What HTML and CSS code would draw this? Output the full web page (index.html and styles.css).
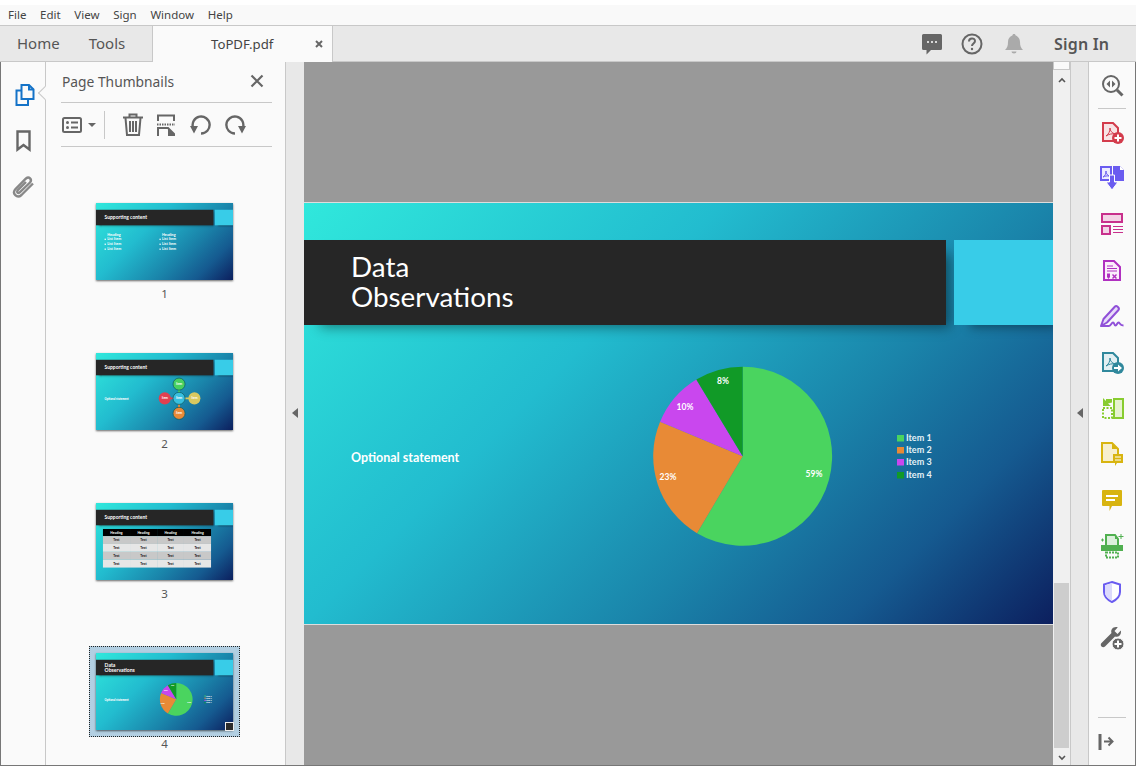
FILE: index.html
```html
<!DOCTYPE html>
<html lang="en">
<head>
<meta charset="utf-8">
<title>ToPDF.pdf</title>
<link rel="stylesheet" href="styles.css">
</head>
<body>
<div class="app">
  <nav class="menu">
    <span>File</span><span>Edit</span><span>View</span><span>Sign</span><span>Window</span><span>Help</span>
  </nav>
  <header class="tabs">
    <div class="tabs-nav"><span class="tab-home">Home</span><span>Tools</span></div>
    <div class="tab-file"><span class="tab-name">ToPDF.pdf</span>
      <svg class="tab-close" viewBox="0 0 8 8"><path d="M1 1l6 6M7 1L1 7"/></svg>
    </div>
    <div class="tabs-right">
      <svg class="top-ic" viewBox="0 0 22 22"><path class="f-66" d="M2.500 1h17a1.500 1.500 0 0 1 1.500 1.500v13a1.500 1.500 0 0 1-1.500 1.500H10l-4.500 4.500V17h-3A1.500 1.500 0 0 1 1 15.500v-13A1.500 1.500 0 0 1 2.500 1z"/><circle class="f-w" cx="7" cy="9" r="1"/><circle class="f-w" cx="11" cy="9" r="1"/><circle class="f-w" cx="15" cy="9" r="1"/></svg>
      <svg class="top-ic help" viewBox="0 0 22 22"><circle class="s-66" cx="11" cy="11" r="9.500"/><path class="s-66" d="M8 8.500c0-4 6-4 6-.5 0 2.500-3 2.500-3 5"/><circle class="f-66" cx="11" cy="16" r="1.200"/></svg>
      <svg class="top-ic bell" viewBox="0 0 22 22"><path class="f-aa" d="M11 1c1 0 1.600.7 1.600 1.600C15.500 3.400 17 6 17 9c0 4 1 6 3 8H2c2-2 3-4 3-8 0-3 1.500-5.600 4.400-6.400C9.400 1.700 10 1 11 1z"/><path class="f-aa" d="M8.500 18.500h5a2.500 2 0 0 1-5 0z"/></svg>
      <span class="sign-in">Sign In</span>
    </div>
  </header>

  <main class="work">
    <aside class="rail">
      <button class="rail-btn"><svg class="ic" viewBox="0 0 28 28"><path class="s-blue" d="M12.500 4h7.500l4.500 4.500V18h-12z"/><path class="s-blue" d="M20 4v4.500h4.500"/><path class="s-blue" d="M12 9.500H7.500V24H19v-5.500"/></svg></button>
      <button class="rail-btn"><svg class="ic" viewBox="0 0 28 28"><path class="s-66 heavy" d="M8.500 4.500h12v18l-6-4.500-6 4.500z"/></svg></button>
      <button class="rail-btn"><svg class="ic" viewBox="0 0 28 28"><path class="s-88 heavy" d="M24 10.500L12.500 22c-4.500 4-10-1.500-6-6L17 5.500c3-2.500 6.500 1 4 4L10.500 19.500c-1.500 1.200-3-.3-2-2L17 9"/></svg></button>
      <span class="notch"></span>
    </aside>

    <section class="panel">
      <div class="panel-head"><span>Page Thumbnails</span>
        <svg class="panel-close" viewBox="0 0 14 14"><path d="M1.500 1.500l11 11M12.500 1.500l-11 11"/></svg>
      </div>
      <div class="panel-tools">
        <svg class="tool list" viewBox="0 0 20 16"><rect class="s-66" x="1" y="1" width="18" height="14" rx="1.500"/><circle class="f-66" cx="5.500" cy="5.500" r="1.500"/><circle class="f-66" cx="5.500" cy="10.500" r="1.500"/><path class="s-66" d="M9 5.500h7M9 10.500h7"/></svg>
        <span class="caret"></span>
        <span class="tool-sep"></span>
        <svg class="tool trash" viewBox="0 0 22 23"><path class="s-66" d="M1 4.500h20M7.500 4V1.500h7V4M3.500 5l1.500 17h12l1.500-17M8 8v11M11 8v11M14 8v11"/></svg>
        <svg class="tool insert" viewBox="0 0 18 22"><path class="s-66" d="M1 7V1.500h16V7M1 22v-8h10l6 6v2"/><path class="f-66" d="M11 14l6 6v2h-6z"/><path class="dots" d="M0 10.500h18"/></svg>
        <svg class="tool rot" viewBox="0 0 22 20"><path class="s-66 heavy" d="M11 18.500a8.500 8.500 0 1 0-8-6"/><path class="f-66" d="M0 11h8l-4 7.500z"/></svg>
        <svg class="tool rot rot-r" viewBox="0 0 22 20"><path class="s-66 heavy" d="M11 18.500a8.500 8.500 0 1 1 8-6"/><path class="f-66" d="M22 11h-8l4 7.500z"/></svg>
      </div>
      <div class="thumbs">
        <figure class="thumb-item">
          <div class="thumb-frame"><div class="thumb"><div class="slide scaled">
            <div class="slide-head"><h2 class="slide-title small">Supporting content</h2><div class="slide-box"></div></div>
            <div class="columns">
              <ul class="col"><li class="col-h">Heading</li><li>List Item</li><li>List Item</li><li>List Item</li></ul>
              <ul class="col"><li class="col-h">Heading</li><li>List Item</li><li>List Item</li><li>List Item</li></ul>
            </div>
          </div></div></div>
          <figcaption>1</figcaption>
        </figure>
        <figure class="thumb-item">
          <div class="thumb-frame"><div class="thumb"><div class="slide scaled">
            <div class="slide-head"><h2 class="slide-title small">Supporting content</h2><div class="slide-box"></div></div>
            <div class="slide-body tight">
              <p class="statement narrow">Optional statement</p>
              <svg class="diagram" viewBox="0 0 240 240">
                <path d="M120 42v78" stroke="#48d060" stroke-width="10"/><path d="M120 120h84" stroke="#d8c860" stroke-width="10"/><path d="M120 120v82" stroke="#e88a38" stroke-width="10"/><path d="M42 120h78" stroke="#e04050" stroke-width="10"/>
                <circle cx="120" cy="42" r="33" fill="#48d060" stroke="#0f5a60" stroke-width="4"/><circle cx="204" cy="120" r="33" fill="#d8c860"/><circle cx="120" cy="202" r="33" fill="#e88a38" stroke="#0f5a60" stroke-width="4"/><circle cx="42" cy="120" r="33" fill="#e04050"/><circle cx="120" cy="120" r="33" fill="#38c0e0" stroke="#0f5a60" stroke-width="4"/>
                <g class="node-t"><text x="120" y="48">Item</text><text x="204" y="126">Item</text><text x="120" y="208">Item</text><text x="42" y="126">Item</text><text x="120" y="126">Item</text></g>
              </svg>
            </div>
          </div></div></div>
          <figcaption>2</figcaption>
        </figure>
        <figure class="thumb-item">
          <div class="thumb-frame"><div class="thumb"><div class="slide scaled">
            <div class="slide-head"><h2 class="slide-title small">Supporting content</h2><div class="slide-box"></div></div>
            <table class="s-table">
              <tr><th>Heading</th><th>Heading</th><th>Heading</th><th>Heading</th></tr>
              <tr><td>Text</td><td>Text</td><td>Text</td><td>Text</td></tr>
              <tr><td>Text</td><td>Text</td><td>Text</td><td>Text</td></tr>
              <tr><td>Text</td><td>Text</td><td>Text</td><td>Text</td></tr>
              <tr><td>Text</td><td>Text</td><td>Text</td><td>Text</td></tr>
            </table>
          </div></div></div>
          <figcaption>3</figcaption>
        </figure>
        <figure class="thumb-item">
          <div class="thumb-frame selected"><div class="thumb"><div class="slide scaled">
            <div class="slide-head"><h2 class="slide-title bold">Data<br>Observations</h2><div class="slide-box"></div></div>
            <div class="slide-body">
              <p class="statement">Optional statement</p>
              <svg class="chart" viewBox="0 0 290 186">
                <path fill="#4ad45f" d="M92.700 92.200V2.700A89.500 89.500 0 1 1 47 169.200z"/><path fill="#e88a36" d="M92.700 92.200L47 169.200A89.500 89.500 0 0 1 10.100 57.800z"/><path fill="#c947ee" d="M92.700 92.200L10.100 57.800A89.500 89.500 0 0 1 46.300 15.600z"/><path fill="#119a27" d="M92.700 92.200L46.300 15.600A89.500 89.500 0 0 1 92.700 2.700z"/>
                <g class="pie-t"><text x="164" y="113">59%</text><text x="18" y="116">23%</text><text x="35" y="46">10%</text><text x="73" y="20">8%</text></g>
                <rect x="247" y="71" width="7" height="6.500" fill="#4ad45f"/><rect x="247" y="83" width="7" height="6.500" fill="#e88a36"/><rect x="247" y="95" width="7" height="6.500" fill="#c947ee"/><rect x="247" y="108" width="7" height="6.500" fill="#119a27"/>
                <g class="leg-t"><text x="256" y="77.500">Item 1</text><text x="256" y="89.500">Item 2</text><text x="256" y="101.500">Item 3</text><text x="256" y="114.500">Item 4</text></g>
              </svg>
            </div>
          </div></div><span class="thumb-handle"></span></div>
          <figcaption>4</figcaption>
        </figure>
      </div>
    </section>

    <div class="strip strip-left"><span class="tri"></span></div>

    <section class="page">
      <article class="slide">
        <div class="slide-head"><h1 class="slide-title">Data<br>Observations</h1><div class="slide-box"></div></div>
        <div class="slide-body">
          <p class="statement">Optional statement</p>
          <svg class="chart" viewBox="0 0 290 186">
            <path fill="#4ad45f" d="M92.700 92.200V2.700A89.500 89.500 0 1 1 47 169.200z"/><path fill="#e88a36" d="M92.700 92.200L47 169.200A89.500 89.500 0 0 1 10.100 57.800z"/><path fill="#c947ee" d="M92.700 92.200L10.100 57.800A89.500 89.500 0 0 1 46.300 15.600z"/><path fill="#119a27" d="M92.700 92.200L46.300 15.600A89.500 89.500 0 0 1 92.700 2.700z"/>
            <g class="pie-t"><text x="164" y="113">59%</text><text x="18" y="116">23%</text><text x="35" y="46">10%</text><text x="73" y="20">8%</text></g>
            <rect x="247" y="71" width="7" height="6.500" fill="#4ad45f"/><rect x="247" y="83" width="7" height="6.500" fill="#e88a36"/><rect x="247" y="95" width="7" height="6.500" fill="#c947ee"/><rect x="247" y="108" width="7" height="6.500" fill="#119a27"/>
            <g class="leg-t"><text x="256" y="77">Item 1</text><text x="256" y="89">Item 2</text><text x="256" y="101">Item 3</text><text x="256" y="114">Item 4</text></g>
          </svg>
        </div>
      </article>
    </section>

    <div class="scrollbar">
      <span class="sb-grip"></span>
      <svg class="sb-chev" viewBox="0 0 8 6"><path d="M1 5l3-3 3 3"/></svg>
      <span class="sb-thumb"></span>
      <svg class="sb-chev" viewBox="0 0 8 6"><path d="M1 1l3 3 3-3"/></svg>
    </div>

    <div class="strip strip-right"><span class="tri"></span></div>

    <aside class="tools">
      <button class="tool-btn"><svg class="ic" viewBox="0 0 28 28"><circle class="s-66" cx="13" cy="13" r="8"/><path class="s-66 thick" d="M19 19l5.500 5.500"/><path class="f-66" d="M12 9.500v7L8.500 13zM14 9.500v7l3.500-3.500z"/></svg></button>
      <hr class="rule">
      <button class="tool-btn"><svg class="ic" viewBox="0 0 28 28"><path fill="#f8e3e5" stroke="#d33c4c" stroke-width="2" d="M5 5h10l5 5v13H5z"/><path fill="none" stroke="#d33c4c" d="M8 18c3-2 4-5 4-8 0 3 2 5 5 6-3-.5-6 0-9 2z"/><circle cx="20" cy="20" r="6" fill="#d33c4c"/><path stroke="#fff" stroke-width="2" d="M16.500 20h7M20 16.500v7"/></svg></button>
      <button class="tool-btn"><svg class="ic" viewBox="0 0 28 28"><path fill="#ecebff" stroke="#6a5cf0" stroke-width="2" d="M3 3h10v13H3z"/><path fill="none" stroke="#6a5cf0" d="M5 13c2-1 3-3 3-6 0 2 1 4 3 5-2-.3-4 0-6 1z"/><path fill="#6a5cf0" d="M15 2h7l4 4v11H15z"/><path fill="#fff" d="M22 2l4 4h-4z"/><path fill="#6a5cf0" stroke="#fff" d="M11.500 11h5v7h3.500l-6 8-6-8h3.500z"/></svg></button>
      <button class="tool-btn"><svg class="ic" viewBox="0 0 28 28"><rect x="4" y="4" width="20" height="8" fill="#f3d4e6" stroke="#c8308c" stroke-width="2"/><rect x="4" y="16" width="8" height="8" fill="#f3d4e6" stroke="#c8308c" stroke-width="2"/><path stroke="#c8308c" d="M15 16.500h10M15 19.500h10M15 22.500h10"/></svg></button>
      <button class="tool-btn"><svg class="ic" viewBox="0 0 28 28"><path fill="#fbeefb" stroke="#b030c0" stroke-width="2" d="M6 5h10l6 6v13H6z"/><path stroke="#b030c0" d="M9 10h6M9 12.500h10M9 15h10"/><path fill="#b030c0" d="M9 17.500h3v3.500l-1.500 2-1.500-2zM15 18l1.500 1.500L18 18l1 1-1.500 1.500L19 22l-1 1-1.500-1.500L15 23l-1-1 1.500-1.500L14 19z"/></svg></button>
      <button class="tool-btn"><svg class="ic" viewBox="0 0 28 28"><path fill="#e8dcfa" stroke="#9050d8" stroke-width="2" stroke-linejoin="round" d="M3 24l2.500-7L17 4.500c1.500-1.500 5 1.500 3.500 3.500L9 20.500z"/><path fill="none" stroke="#9050d8" stroke-width="2" d="M3 24h8c2 0 2.500-3.500 4-3.500s1 3 2.500 3 1.500-3 3-3 1 3 5 3"/></svg></button>
      <button class="tool-btn"><svg class="ic" viewBox="0 0 28 28"><path fill="#e2eff2" stroke="#30889c" stroke-width="2" d="M5 5h10l5 5v13H5z"/><path fill="none" stroke="#30889c" d="M8 18c3-2 4-5 4-8 0 3 2 5 5 6-3-.5-6 0-9 2z"/><circle cx="20" cy="20" r="6" fill="#30889c"/><path fill="#fff" d="M16 19h4v-2.500l4 3.500-4 3.500V21h-4z"/></svg></button>
      <button class="tool-btn"><svg class="ic" viewBox="0 0 28 28"><rect x="16" y="5" width="9" height="19" fill="#e6f3d0" stroke="#88cc30" stroke-width="2"/><rect x="5" y="14" width="9" height="10" fill="none" stroke="#88cc30" stroke-width="2" stroke-dasharray="2 1.500"/><path fill="#88cc30" d="M5 4v8h8l-3-2.500 4-1V5h-6L8 7z"/></svg></button>
      <button class="tool-btn"><svg class="ic" viewBox="0 0 28 28"><path fill="#f7efcd" stroke="#d8b410" stroke-width="2" d="M4 3h10l6 6v13H4z"/><path fill="#d8b410" d="M14 3v6h6z"/><path fill="#d8b410" d="M15 14h10v9h-6l-2 3v-3h-2z"/><path stroke="#fff" d="M17 17h6M17 20h6"/></svg></button>
      <button class="tool-btn"><svg class="ic" viewBox="0 0 28 28"><path fill="#d8b410" d="M5 4h18a1 1 0 0 1 1 1v14a1 1 0 0 1-1 1h-9l-2.500 5v-5H5a1 1 0 0 1-1-1V5a1 1 0 0 1 1-1z"/><path stroke="#fff" stroke-width="2" d="M8 10h12M8 14h9"/></svg></button>
      <button class="tool-btn"><svg class="ic" viewBox="0 0 28 28"><path fill="#dcf0dc" stroke="#50b050" stroke-width="2" d="M8 3h9l3 4v7H8z"/><path fill="#50b050" d="M17 3v4h3z"/><path fill="#50b050" d="M3 13h22v6H3z"/><rect x="8" y="20.500" width="12" height="5" fill="none" stroke="#50b050" stroke-width="2" stroke-dasharray="2 1"/><path stroke="#50b050" d="M23 2v5M20.500 4.500h5M3 8h3M4.500 6.500v3"/></svg></button>
      <button class="tool-btn"><svg class="ic" viewBox="0 0 28 28"><path fill="#fff" stroke="#6a5cf0" stroke-width="2" d="M14 4l8 2.500V14c0 5-4 8-8 10-4-2-8-5-8-10V6.500z"/><path fill="#dcdafc" d="M14 5v18c-4-2-7-5-7-9V7.200z"/></svg></button>
      <button class="tool-btn"><svg class="ic" viewBox="0 0 28 28"><path fill="#666" d="M18 3c-3.500 0-5.500 3-4.500 6L3.500 19c-1 1-1 2.500 0 3.500s2.500 1 3.500 0l10-10c3 1 6-1 6-4.500 0-.5 0-1-.2-1.500L19.500 10 16.500 7l3.300-3.700C19.200 3.100 18.600 3 18 3z"/><circle cx="20" cy="20" r="6" fill="#666" stroke="#fafafa"/><path stroke="#fff" stroke-width="2" d="M16.500 20h7M20 16.500v7"/></svg></button>
      <div class="tools-foot">
        <hr class="rule">
        <button class="tool-btn"><svg class="ic" viewBox="0 0 28 28"><path class="s-66 thick" d="M11 7v16"/><path class="s-66" d="M15 14.500h8M19.500 10.500l4 4-4 4"/></svg></button>
      </div>
    </aside>
  </main>
</div>
</body>
</html>
```

FILE: styles.css
```css
* { box-sizing: border-box; }
html, body { margin: 0; height: 100%; background: #fff; }
body { font-family: "Noto Sans", "Open Sans", sans-serif; color: #555; overflow: hidden; }
button { all: unset; display: flex; align-items: center; justify-content: center; }
h1, h2, p, ul, figure { margin: 0; padding: 0; }

.app { height: 766px; width: 1136px; display: flex; flex-direction: column; padding-top: 5px; }

.f-66 { fill: #666; }
.f-aa { fill: #aaa; }
.f-w { fill: #fff; }
.s-66 { fill: none; stroke: #666; stroke-width: 2; }
.s-88 { fill: none; stroke: #888; stroke-width: 2; }
.s-blue { fill: none; stroke: #1473c8; stroke-width: 2; }
.thick { stroke-width: 3; }
.heavy { stroke-width: 2.400; }
.ic { width: 28px; height: 28px; display: block; }

/* menu */
.menu { height: 20px; background: #f9f9f9; display: flex; align-items: center; gap: 13.700px; padding: 0 0 1px 8px; font-size: 11.500px; color: #444; flex: none; }

/* tabs */
.tabs { height: 37px; flex: none; display: flex; background: #e8e8e8; border-top: 1px solid #c8c8c8; border-bottom: 1px solid #c8c8c8; }
.tabs-nav { width: 153px; display: flex; align-items: center; gap: 29px; padding: 0 0 1px 17px; font-size: 15px; border-right: 1px solid #c8c8c8; }
.tab-file { width: 180px; height: 36px; background: #fafafa; border-right: 1px solid #c8c8c8; display: flex; align-items: center; position: relative; font-size: 13.200px; color: #444; z-index: 1; }
.tab-name { margin-left: 58px; }
.tab-close { width: 8px; height: 8px; margin-left: auto; margin-right: 9px; }
.tab-close path { stroke: #666; stroke-width: 2; fill: none; }
.tabs-right { flex: 1; display: flex; align-items: center; padding-left: 588px; }
.top-ic { width: 22px; height: 22px; display: block; flex: none; }
.help { margin-left: 18px; }
.bell { margin-left: 20px; }
.sign-in { margin-left: 29px; font-size: 16px; font-weight: 600; color: #555; letter-spacing: .2px; }

/* work */
.work { flex: 1; min-height: 0; display: flex; border: 1px solid #777; border-top: 0; background: #e8e8e8; }

.rail { width: 45px; flex: none; background: #fafafa; border-right: 1px solid #c8c8c8; padding-top: 10px; position: relative; }
.rail-btn { height: 46px; width: 100%; }
.notch { position: absolute; left: 39px; top: 26px; width: 10px; height: 10px; background: #fafafa; border-left: 1px solid #c8c8c8; border-bottom: 1px solid #c8c8c8; transform: rotate(45deg); }

.panel { width: 240px; flex: none; background: #fafafa; border-right: 1px solid #c8c8c8; overflow: hidden; display: flex; flex-direction: column; }
.panel-head { height: 41px; margin: 0 13px 0 15px; padding: 0 0 2px 1px; flex: none; display: flex; align-items: center; justify-content: space-between; font-size: 13.800px; border-bottom: 1px solid #c8c8c8; color: #555; }
.panel-close { width: 14px; height: 14px; margin-right: 8px; }
.panel-close path { fill: none; stroke: #666; stroke-width: 2.200; }
.panel-tools { height: 44px; margin: 0 13px 0 15px; flex: none; display: flex; align-items: center; border-bottom: 1px solid #c8c8c8; position: relative; padding-left: 1px; }
.tool { display: block; flex: none; }
.list { width: 20px; height: 16px; }
.caret { width: 0; height: 0; margin-left: 6px; border: 4px solid transparent; border-top-color: #666; border-bottom: 0; }
.tool-sep { width: 1px; height: 28px; background: #c8c8c8; margin-left: 8px; }
.trash { width: 22px; height: 23px; margin-left: 17px; }
.insert { width: 18px; height: 22px; margin-left: 13px; }
.dots { fill: none; stroke: #666; stroke-width: 2; stroke-dasharray: 1.500 1; }
.rot { width: 22px; height: 20px; margin-left: 15px; }
.rot-r { margin-left: 12px; }

.thumbs { display: flex; flex-direction: column; gap: 45px; padding-top: 49px; align-items: center; padding-right: 2px; }
.thumb-item { display: flex; flex-direction: column; align-items: center; }
.thumb-frame { width: 151px; height: 91px; padding: 6px; border: 1px dotted transparent; position: relative; }
.thumb-frame.selected { background: #b2cfe2; border-color: #222; }
.thumb { width: 137px; height: 77px; overflow: hidden; box-shadow: 0 1px 2px rgba(0,0,0,.6); }
.thumb-item figcaption { height: 14px; line-height: 14px; font-size: 11.500px; color: #555; }
.thumb-handle { position: absolute; right: 5px; bottom: 5px; width: 9px; height: 9px; background: #2c2c2c; border: 1px solid #eee; }

/* slide */
.slide { width: 749px; height: 421px; flex: none; padding-top: 37px; overflow: hidden; background: linear-gradient(135deg, #30e8dc 0%, #22bccf 36%, #1a84aa 64%, #155a90 82%, #0c1f5e 100%); }
.scaled { transform: scale(.1829); transform-origin: 0 0; }
.slide-head { height: 85px; display: flex; gap: 8px; }
.slide-title { width: 642px; background: #262626; color: #fff; font-family: "Lato", "Open Sans", sans-serif; font-weight: 400; font-size: 27.800px; line-height: 30px; padding: 12px 0 0 47px; box-shadow: 10px 8px 12px -6px rgba(0,0,0,.45); }
.slide-title.small { font-size: 27px; font-weight: 700; padding-top: 26px; }
.slide-title.bold { font-weight: 700; }
.slide-box { flex: 1; background: #38cce8; box-shadow: 10px 8px 10px -6px rgba(0,0,0,.4); }
.slide-body { display: flex; align-items: center; padding: 39px 0 0 47px; }
.slide-body.tight { padding-top: 6px; }
.statement { width: 299px; font-family: "Lato", "Open Sans", sans-serif; font-weight: 700; font-size: 12.500px; color: #fff; flex: none; }
.statement.narrow { width: 287px; margin-top: 10px; }
.scaled .statement { font-size: 15px; font-weight: 900; }
.chart { width: 290px; height: 186px; flex: none; display: block; }
.pie-t text, .leg-t text { font-family: "Lato", "Open Sans", sans-serif; font-size: 8.500px; font-weight: 700; fill: #fff; }
.pie-t text { text-anchor: middle; }
.leg-t text { fill: #e6f2f6; font-size: 9px; }
.scaled .pie-t text, .scaled .leg-t text { font-size: 11px; font-weight: 900; fill: #fff; }
.diagram { width: 240px; height: 240px; flex: none; display: block; }
.node-t text { font-family: "Lato", sans-serif; font-size: 17px; font-weight: 700; fill: #fff; text-anchor: middle; }

.columns { display: flex; padding: 40px 0 0 47px; color: #fff; font-family: "Lato", sans-serif; font-weight: 700; font-size: 20px; line-height: 27px; }
.col { width: 300px; list-style: none; }
.col li { padding-left: 14px; position: relative; }
.col li::before { content: ""; position: absolute; left: 0; top: 11px; width: 7px; height: 7px; background: #fff; }
.col .col-h { line-height: 22px; }
.col .col-h::before { display: none; }

.s-table { border-collapse: collapse; margin: 20px 0 0 38px; width: 591px; table-layout: fixed; font-family: "Lato", sans-serif; font-size: 18px; text-align: center; }
.s-table th { background: #000; color: #fff; height: 39px; font-weight: 700; padding: 0; }
.s-table td { height: 43px; color: #111; padding: 0; font-weight: 700; }
.s-table tr:nth-child(even) td { background: #c8c8c8; }
.s-table tr:nth-child(odd) td { background: #e6e6e6; }

/* page */
.strip { width: 18px; flex: none; background: #e8e8e8; display: flex; align-items: center; justify-content: center; padding-bottom: 2px; }
.strip-right { border-right: 1px solid #c8c8c8; width: 18px; }
.tri { width: 0; height: 0; border: 5px solid transparent; border-right: 6px solid #666; border-left: 0; }
.page { width: 749px; flex: none; background: #999; padding-top: 140px; }
.page .slide { box-sizing: content-box; height: 384px; border-top: 1px solid #ddd; border-bottom: 1px solid #ddd; }

.scrollbar { width: 18px; flex: none; background: #f0f0f0; border-right: 1px solid #c8c8c8; display: flex; flex-direction: column; align-items: center; position: relative; }
.sb-grip { width: 17px; height: 8px; background: #fafafa; border: 1px solid #c8c8c8; border-top: 0; align-self: flex-start; flex: none; }
.sb-chev { width: 8px; height: 6px; margin: 7px 0; flex: none; display: block; }
.sb-chev path { fill: none; stroke: #555; stroke-width: 1.600; }
.sb-thumb { width: 15px; height: 165px; background: #cdcdcd; margin-top: 493px; flex: none; }

.tools { width: 46px; flex: none; background: #fafafa; display: flex; flex-direction: column; }
.tool-btn { height: 46px; flex: none; }
.rule { width: 28px; height: 1px; border: 0; margin: 0 auto; background: #c8c8c8; flex: none; }
.tools-foot { margin-top: auto; padding-bottom: 1px; }
```
